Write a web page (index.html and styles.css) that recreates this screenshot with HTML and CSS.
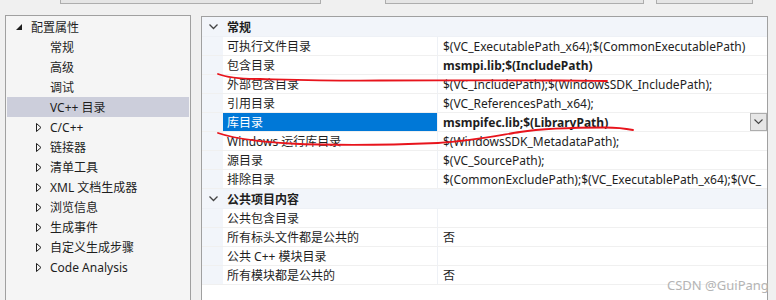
FILE: index.html
```html
<!DOCTYPE html>
<html>
<head>
<meta charset="utf-8">
<link rel="stylesheet" href="styles.css">
</head>
<body>
<div class="topbar">
  <div class="combo c1"></div>
  <div class="combo c2"></div>
  <div class="combo c3"></div>
</div>
<div class="main">
  <div class="tree">
    <div class="node top"><svg class="exp" width="6" height="6" viewBox="0 0 6 6"><polygon points="6,0 6,6 0,6" fill="#1e1e1e"/></svg><span>配置属性</span></div>
    <div class="node leaf"><span>常规</span></div>
    <div class="node leaf"><span>高级</span></div>
    <div class="node leaf"><span>调试</span></div>
    <div class="node leaf sel"><span>VC++ 目录</span></div>
    <div class="node coll"><svg class="col" width="6" height="9" viewBox="0 0 6 9"><polygon points="0.5,0.5 5,4.5 0.5,8.5" fill="none" stroke="#1e1e1e" stroke-width="1"/></svg><span>C/C++</span></div>
    <div class="node coll"><svg class="col" width="6" height="9" viewBox="0 0 6 9"><polygon points="0.5,0.5 5,4.5 0.5,8.5" fill="none" stroke="#1e1e1e" stroke-width="1"/></svg><span>链接器</span></div>
    <div class="node coll"><svg class="col" width="6" height="9" viewBox="0 0 6 9"><polygon points="0.5,0.5 5,4.5 0.5,8.5" fill="none" stroke="#1e1e1e" stroke-width="1"/></svg><span>清单工具</span></div>
    <div class="node coll"><svg class="col" width="6" height="9" viewBox="0 0 6 9"><polygon points="0.5,0.5 5,4.5 0.5,8.5" fill="none" stroke="#1e1e1e" stroke-width="1"/></svg><span>XML 文档生成器</span></div>
    <div class="node coll"><svg class="col" width="6" height="9" viewBox="0 0 6 9"><polygon points="0.5,0.5 5,4.5 0.5,8.5" fill="none" stroke="#1e1e1e" stroke-width="1"/></svg><span>浏览信息</span></div>
    <div class="node coll"><svg class="col" width="6" height="9" viewBox="0 0 6 9"><polygon points="0.5,0.5 5,4.5 0.5,8.5" fill="none" stroke="#1e1e1e" stroke-width="1"/></svg><span>生成事件</span></div>
    <div class="node coll"><svg class="col" width="6" height="9" viewBox="0 0 6 9"><polygon points="0.5,0.5 5,4.5 0.5,8.5" fill="none" stroke="#1e1e1e" stroke-width="1"/></svg><span>自定义生成步骤</span></div>
    <div class="node coll"><svg class="col" width="6" height="9" viewBox="0 0 6 9"><polygon points="0.5,0.5 5,4.5 0.5,8.5" fill="none" stroke="#1e1e1e" stroke-width="1"/></svg><span>Code Analysis</span></div>
  </div>
  <div class="grid">
    <div class="hdr"><div class="gut"><svg width="9" height="6" viewBox="0 0 9 6"><polyline points="0.5,0.5 4.5,4.5 8.5,0.5" fill="none" stroke="#444" stroke-width="1.3"/></svg></div><div class="htext">常规</div></div>
    <div class="row"><div class="gut"></div><div class="name">可执行文件目录</div><div class="val">$(VC_ExecutablePath_x64);$(CommonExecutablePath)</div></div>
    <div class="row"><div class="gut"></div><div class="name">包含目录</div><div class="val b">msmpi.lib;$(IncludePath)</div></div>
    <div class="row"><div class="gut"></div><div class="name">外部包含目录</div><div class="val">$(VC_IncludePath);$(WindowsSDK_IncludePath);</div></div>
    <div class="row"><div class="gut"></div><div class="name">引用目录</div><div class="val">$(VC_ReferencesPath_x64);</div></div>
    <div class="row"><div class="gut"></div><div class="name active">库目录</div><div class="val b">msmpifec.lib;$(LibraryPath)<span class="dd"><svg width="9" height="6" viewBox="0 0 9 6"><polyline points="0.5,0.5 4.5,4.5 8.5,0.5" fill="none" stroke="#444" stroke-width="1.1"/></svg></span></div></div>
    <div class="row"><div class="gut"></div><div class="name">Windows 运行库目录</div><div class="val">$(WindowsSDK_MetadataPath);</div></div>
    <div class="row"><div class="gut"></div><div class="name">源目录</div><div class="val">$(VC_SourcePath);</div></div>
    <div class="row"><div class="gut"></div><div class="name">排除目录</div><div class="val">$(CommonExcludePath);$(VC_ExecutablePath_x64);$(VC_</div></div>
    <div class="hdr"><div class="gut"><svg width="9" height="6" viewBox="0 0 9 6"><polyline points="0.5,0.5 4.5,4.5 8.5,0.5" fill="none" stroke="#444" stroke-width="1.3"/></svg></div><div class="htext">公共项目内容</div></div>
    <div class="row"><div class="gut"></div><div class="name">公共包含目录</div><div class="val"></div></div>
    <div class="row"><div class="gut"></div><div class="name">所有标头文件都是公共的</div><div class="val">否</div></div>
    <div class="row"><div class="gut"></div><div class="name">公共 C++ 模块目录</div><div class="val"></div></div>
    <div class="row"><div class="gut"></div><div class="name">所有模块都是公共的</div><div class="val">否</div></div>
  </div>
</div>
<svg class="ink" width="776" height="300" viewBox="0 0 776 300">
  <path d="M218,74 C228,78 240,79 260,79 C300,80 330,81 380,80.5 C440,80 500,80.5 560,80.5 C585,80.5 598,81 607,81" fill="none" stroke="#e8141c" stroke-width="1.8" stroke-linecap="round"/>
  <path d="M218,133 C232,138 250,141 290,143.5 C330,145.5 380,145.5 438,143 C470,141 495,136 520,132 C545,128 575,127.5 605,127.5 C620,127.5 628,129 633,130" fill="none" stroke="#e8141c" stroke-width="1.8" stroke-linecap="round"/>
</svg>
<div class="wm">CSDN @GuiPang</div>
</body>
</html>
```

FILE: styles.css
```css
html, body {
  margin: 0;
  padding: 0;
}
body {
  width: 776px;
  height: 300px;
  overflow: hidden;
  background: #f0f0f0;
  font-family: "Noto Sans", "Noto Sans CJK SC", sans-serif;
  font-size: 12px;
  color: #1e1e1e;
  position: relative;
}
.topbar {
  display: flex;
  height: 4px;
}
.combo {
  height: 3px;
  background: #e5e5e5;
  border: 1px solid #adadad;
  border-top: none;
}
.c1 { margin-left: 60px; width: 259px; }
.c2 { margin-left: 64px; width: 257px; }
.c3 { margin-left: 12px; width: 95px; }

.main {
  display: flex;
  align-items: flex-start;
  margin-top: 11px;
}
.tree {
  margin-left: 5px;
  width: 186px;
  height: 285px;
  background: #f5f5f5;
  border: 1px solid #a0a0a0;
  border-bottom: none;
  padding: 1px 1px 0 1px;
  box-sizing: border-box;
  flex: none;
}
.node {
  height: 20px;
  display: flex;
  align-items: center;
  white-space: nowrap;
}
.node.top { padding-left: 9px; }
.node.top .exp { margin-right: 9px; }
.node.leaf { padding-left: 43px; }
.node.coll { padding-left: 29px; }
.node.coll .col { margin-right: 8px; }
.node.sel { background: #cccedb; }

.grid {
  margin-left: 10px;
  margin-top: 1px;
  width: 567px;
  height: 284px;
  background: #fff;
  border: 1px solid #a0a0a0;
  border-bottom: none;
  box-sizing: border-box;
  flex: none;
}
.hdr {
  display: flex;
  height: 20px;
  background: #f2f5fa;
  align-items: center;
  border-bottom: 1px solid #eef1f6;
  box-sizing: border-box;
}
.gut {
  width: 21px;
  align-self: stretch;
  background: #f2f5fa;
  display: flex;
  align-items: center;
  justify-content: center;
  flex: none;
}
.hdr .gut svg { margin-left: 2px; margin-top: 1px; }
.htext {
  font-weight: bold;
  padding-left: 4px;
}
.row {
  display: flex;
  height: 19px;
  border-bottom: 1px solid #f0f0f0;
  box-sizing: border-box;
}
.name {
  width: 215px;
  padding-left: 4px;
  box-sizing: border-box;
  border-right: 1px solid #eef1f6;
  display: flex;
  align-items: center;
  white-space: nowrap;
  flex: none;
}
.name.active {
  background: #0078d7;
  color: #fff;
}
.val {
  flex: 1;
  padding-left: 5px;
  display: flex;
  align-items: center;
  white-space: nowrap;
  overflow: hidden;
  position: relative;
}
.val.b { font-weight: bold; }
.dd {
  position: absolute;
  right: 0;
  top: 0;
  width: 17px;
  height: 18px;
  box-sizing: border-box;
  background: #e6e6e6;
  border: 1px solid #adadad;
  display: flex;
  align-items: center;
  justify-content: center;
}
.ink {
  position: absolute;
  left: 0;
  top: 0;
  pointer-events: none;
}
.wm {
  position: absolute;
  left: 667px;
  top: 276px;
  font-family: "Noto Sans", sans-serif;
  font-size: 13px;
  color: #b4b4b4;
}
```
